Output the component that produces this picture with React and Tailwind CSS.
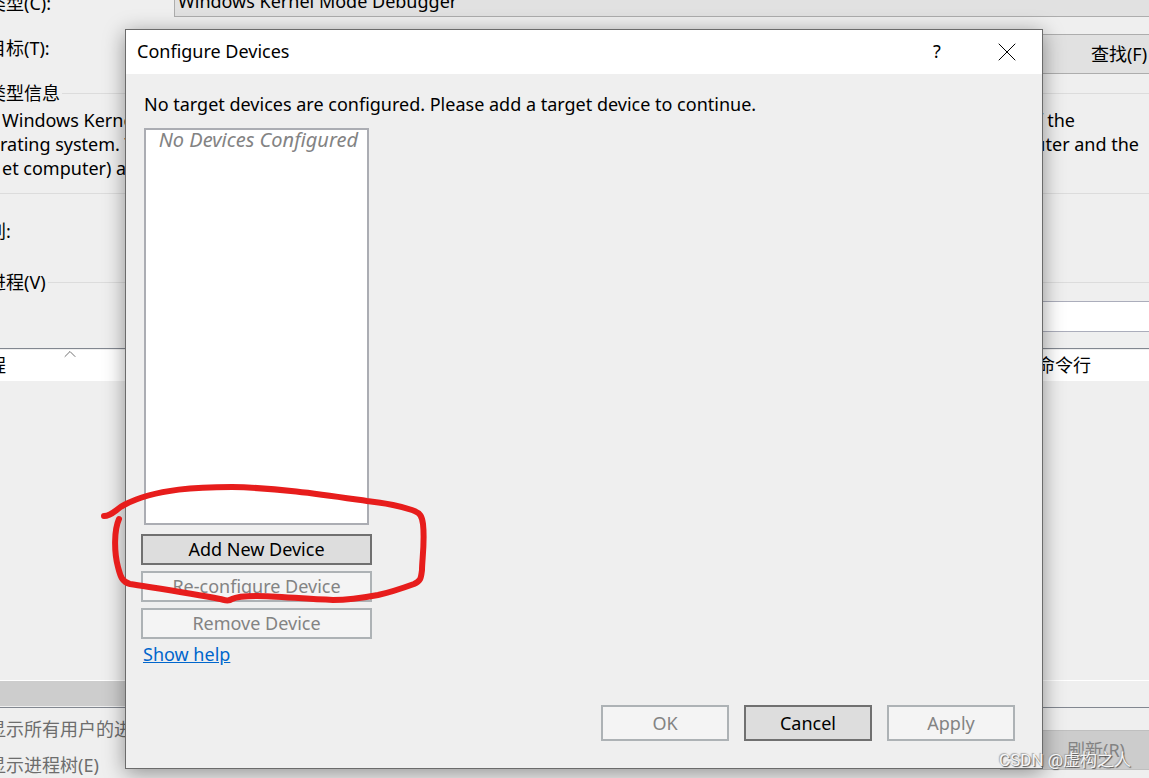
import React from 'react';
import { ChevronUp, X } from 'lucide-react';

const description = [
  { start: 'Windows Kernel', end: 'of the', className: 'pl-[14px] pr-[74px]' },
  { start: 'rating system. T', end: 'puter and the', className: 'pl-[12px] pr-[10px]' },
  { start: 'et computer) a', end: '', className: 'pl-[14px] pr-[10px]' },
];

const DialogButton = ({ children, disabled, className }) => (
  <button
    type="button"
    disabled={disabled}
    className={`border-2 leading-6 ${
      disabled
        ? 'border-[#adb2b5] bg-[#f4f4f4] text-[#838383]'
        : 'border-[#707070] bg-[#dddddd] text-black'
    } ${className}`}
  >
    {children}
  </button>
);

// Attach to process window, sits behind the dialog
const AttachWindow = () => (
  <div className="-mt-[14px] -ml-3 flex min-h-screen flex-col">
    {/* Connection */}
    <div className="flex items-end">
      <label htmlFor="connection" className="w-[186px] leading-7">
        类型(C):
      </label>
      <select
        id="connection"
        className="-mr-2 h-[31px] flex-1 appearance-none border border-[#adadad] bg-[#e1e1e1] pb-0.5 pl-[3px] leading-6"
      >
        <option>Windows Kernel Mode Debugger</option>
      </select>
    </div>
    <div className="mt-[17px] flex items-start justify-between">
      <span className="leading-7">目标(T):</span>
      <button
        type="button"
        className="-mr-[56px] h-10 w-[172px] border border-[#adadad] bg-[#e1e1e1]"
      >
        查找(F)
      </button>
    </div>

    {/* Connection info */}
    <fieldset className="mt-[7px] border-y border-[#dcdcdc] pt-[3px] pb-[13px]">
      <legend className="pr-0.5 leading-6">类型信息</legend>
      {description.map((line) => (
        <p key={line.start} className={`flex justify-between leading-6 ${line.className}`}>
          <span>{line.start}</span>
          <span>{line.end}</span>
        </p>
      ))}
    </fieldset>
    <div className="mt-[25px] leading-6">别:</div>

    {/* Processes */}
    <fieldset className="mt-[27px] border-t border-[#dcdcdc]">
      <legend className="pr-0.5 leading-6">进程(V)</legend>
      <div className="mt-[7px] flex justify-end">
        <input
          type="text"
          aria-label="进程"
          className="-mr-1 h-[31px] w-[240px] border border-[#abadbb] bg-white"
        />
      </div>
    </fieldset>
    <div className="mt-4 flex h-[360px] flex-col border-y border-[#828790] pb-px">
      <table className="w-full">
        <thead>
          <tr className="h-[31px] border-t border-[#efefef] bg-white">
            <th className="relative text-left font-normal">
              程
              <ChevronUp
                className="absolute -top-1.5 left-[72px] size-5 text-[#555555]"
                strokeWidth={1}
              />
            </th>
            <th className="w-[112px] text-left font-normal">命令行</th>
          </tr>
        </thead>
      </table>
      <div className="mt-auto flex h-[26px] border-t border-white">
        <div className="w-1/2 bg-[#cdcdcd]" />
      </div>
    </div>
    <div className="mt-[9px] flex items-start justify-between text-[#6d6d6d]">
      <div className="flex flex-col gap-3">
        <span className="leading-6">显示所有用户的进程</span>
        <span className="leading-6">显示进程树(E)</span>
      </div>
      <button
        type="button"
        disabled
        className="mt-[13px] -mr-[43px] h-10 w-[192px] border border-[#bfbfbf] bg-[#cccccc] text-[#838383]"
      >
        刷新(R)
      </button>
    </div>
  </div>
);

const ConfigureDialog = () => (
  <div
    role="dialog"
    aria-labelledby="dialog-title"
    className="flex flex-1 flex-col border border-[#6b6b6b] bg-[#efefef] shadow-[0_4px_20px_rgba(0,0,0,0.4)]"
  >
    <div className="flex h-11 items-center bg-white pl-[11px]">
      <h1 id="dialog-title" className="flex-1 pb-0.5">
        Configure Devices
      </h1>
      <button type="button" className="w-[70px] pb-0.5">
        ?
      </button>
      <button type="button" aria-label="Close" className="flex w-[70px] justify-center">
        <X className="size-8" strokeWidth={0.75} />
      </button>
    </div>

    <div className="flex flex-1 flex-col pt-[18px] pr-[27px] pb-[27px] pl-[15px]">
      <p className="pl-[3px] leading-6">
        No target devices are configured. Please add a target device to continue.
      </p>

      {/* Device list */}
      <div className="mt-3 flex w-[231px] flex-1 flex-col">
        <div className="mr-[3px] ml-[3px] flex-1 border-2 border-[#abadb3] bg-white pr-[9px] text-right text-[20px] leading-5 text-[#838383] italic">
          No Devices Configured
        </div>
        <div className="mt-[9px] flex flex-col gap-[6px]">
          <DialogButton className="h-[31px] pb-0.5">Add New Device</DialogButton>
          <DialogButton disabled className="h-[31px] pb-0.5">
            Re-configure Device
          </DialogButton>
          <DialogButton disabled className="h-[31px] pb-0.5">
            Remove Device
          </DialogButton>
        </div>
        <a href="#help" className="mt-[3px] self-start pl-0.5 leading-6 text-[#0066cc] underline">
          Show help
        </a>
      </div>

      <div className="mt-[39px] flex justify-end gap-[15px]">
        <DialogButton disabled className="h-9 w-32">
          OK
        </DialogButton>
        <DialogButton className="h-9 w-32">Cancel</DialogButton>
        <DialogButton disabled className="h-9 w-32">
          Apply
        </DialogButton>
      </div>
    </div>
  </div>
);

// Hand drawn circle around the "Add New Device" button
const Marker = () => (
  <svg
    className="pointer-events-none absolute bottom-[168px] left-[95px]"
    width="340"
    height="130"
    viewBox="95 480 340 130"
    fill="none"
    stroke="#e71d1c"
    strokeWidth="6"
    strokeLinecap="round"
    strokeLinejoin="round"
  >
    <path d="M104 516C112 516 116 509 124 505C156 488 202 487 232 487C280 488 325 495 367 501C385 503 400 506 412 510C421 513 422 517 423 524C425 542 422 560 422 570C421 578 421 581 414 584C403 588 392 592 378 595C362 598 345 600 333 600C305 599 275 596 257 596C245 596 236 597 232 599C228 602 225 600 220 599C190 593 155 588 130 584C121 582 120 574 118 567C114 552 114 530 119 519" />
  </svg>
);

export default function App() {
  return (
    <div className="relative min-h-screen overflow-hidden bg-[#efefef] font-['Noto_Sans','Noto_Sans_CJK_SC',sans-serif] text-[18px] text-black">
      <div className="h-screen overflow-hidden">
        <AttachWindow />
      </div>
      <div className="absolute inset-0 flex pt-[29px] pr-[106px] pb-[9px] pl-[125px]">
        <ConfigureDialog />
      </div>
      <Marker />
      <div className="pointer-events-none absolute right-[18px] bottom-[6px] font-['Roboto','Noto_Sans_CJK_SC',sans-serif] text-[17px] leading-6 text-white/90 [text-shadow:1px_1px_1px_#555555,-1px_-1px_1px_#aaaaaa]">
        CSDN @虚构之人
      </div>
    </div>
  );
}
